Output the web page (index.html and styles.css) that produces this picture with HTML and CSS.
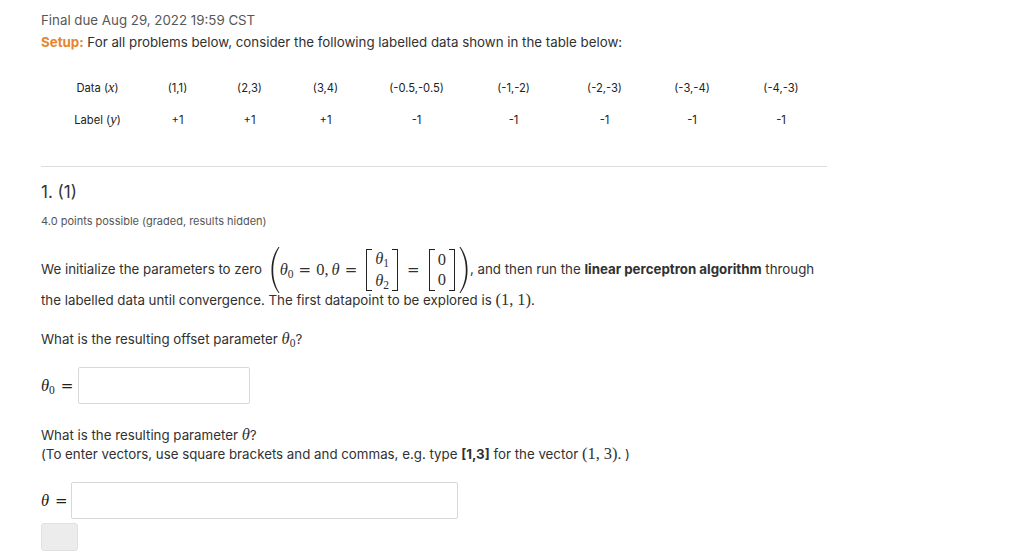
FILE: index.html
```html
<!DOCTYPE html>
<html>
<head>
<meta charset="utf-8">
<link rel="stylesheet" href="styles.css">
</head>
<body>
<div class="page">
  <div class="due">Final due Aug 29, 2022 19:59 CST</div>
  <p class="setup"><span class="setup-label">Setup:</span> For all problems below, consider the following labelled data shown in the table below:</p>

  <table class="data">
    <colgroup>
      <col style="width:85px"><col style="width:75px"><col style="width:69px"><col style="width:83px"><col style="width:99px"><col style="width:95px"><col style="width:87px"><col style="width:88px"><col style="width:90px">
    </colgroup>
    <tr>
      <td>Data (<span class="tm">x</span>)</td><td>(1,1)</td><td>(2,3)</td><td>(3,4)</td><td>(-0.5,-0.5)</td><td>(-1,-2)</td><td>(-2,-3)</td><td>(-3,-4)</td><td>(-4,-3)</td>
    </tr>
    <tr>
      <td>Label (<span class="tm">y</span>)</td><td>+1</td><td>+1</td><td>+1</td><td>-1</td><td>-1</td><td>-1</td><td>-1</td><td>-1</td>
    </tr>
  </table>

  <hr class="rule">

  <h3 class="problem-title">1. (1)</h3>
  <div class="points">4.0 points possible (graded, results hidden)</div>

  <p class="intro">We initialize the parameters to zero <span class="mathblock"><svg class="paren" width="10" height="48" viewBox="0 0 10 48"><path d="M8.5 1 C3 9 1.5 16 1.5 24 C1.5 32 3 39 8.5 47 L9.5 47 C4.8 39 3.2 32 3.2 24 C3.2 16 4.8 9 9.5 1 Z" fill="#222"/></svg><span class="mg"><span class="m">θ</span><sub class="ms">0</sub></span><span class="op">=</span><span class="mr">0,</span><span class="m th">θ</span><span class="op">=</span><span class="matrix"><span class="cell"><span class="m">θ</span><sub class="ms">1</sub></span><span class="cell"><span class="m">θ</span><sub class="ms">2</sub></span></span><span class="op">=</span><span class="matrix"><span class="cell mr">0</span><span class="cell mr">0</span></span><svg class="paren" width="10" height="48" viewBox="0 0 10 48"><path d="M1.5 1 C7 9 8.5 16 8.5 24 C8.5 32 7 39 1.5 47 L0.5 47 C5.2 39 6.8 32 6.8 24 C6.8 16 5.2 9 0.5 1 Z" fill="#222"/></svg></span>, and then run the <b>linear perceptron algorithm</b> through the labelled data until convergence. The first datapoint to be explored is <span class="mr">(1,<span class="sp"></span>1)</span>.</p>

  <p class="question">What is the resulting offset parameter <span class="m">θ</span><sub class="ms">0</sub>?</p>

  <div class="answer a1">
    <span class="label"><span class="m">θ</span><sub class="ms">0</sub><span class="op">=</span></span>
    <input class="box box1" type="text">
  </div>

  <p class="question q2">What is the resulting parameter <span class="m">θ</span>?<br>(To enter vectors, use square brackets and and commas, e.g. type <b>[1,3]</b> for the vector <span class="mr">(1,<span class="sp"></span>3)</span>. )</p>

  <div class="answer a2">
    <span class="label"><span class="m">θ</span><span class="op">=</span></span>
    <input class="box box2" type="text">
  </div>
  <div class="btn"></div>
</div>
</body>
</html>
```
FILE: styles.css
```css
* { box-sizing: border-box; }
body {
  margin: 0;
  background: #fff;
  font-family: Inter, "Noto Sans", sans-serif;
  color: #313131;
  font-size: 13.3px;
}
.page {
  padding: 12px 0 0 41px;
  width: 827px;
}
.due {
  color: #575757;
  line-height: 16px;
}
.setup {
  margin: 6px 0 0 0;
  line-height: 16px;
}
.setup-label {
  color: #e5862e;
  font-weight: 700;
}
.data {
  border-collapse: collapse;
  margin: 22px 0 0 14px;
  font-size: 11.2px;
  table-layout: fixed;
}
.data td {
  text-align: center;
  padding: 0;
  height: 32px;
  color: #222;
}
.tm {
  font-family: "Liberation Serif", "DejaVu Serif", serif;
  font-style: italic;
  font-size: 1.3em;
  line-height: 0;
}
.m {
  font-family: "Liberation Serif", "DejaVu Serif", serif;
  font-style: italic;
  font-size: 16.5px;
}
.ms {
  font-family: "Liberation Serif", "DejaVu Serif", serif;
  font-size: 11.5px;
  vertical-align: -3px;
  line-height: 0;
}
.mr {
  font-family: "Liberation Serif", "DejaVu Serif", serif;
  font-size: 16.5px;
  line-height: 0;
}
.sp { display: inline-block; width: 4px; }
.op {
  font-family: "DejaVu Serif", "Liberation Serif", serif;
  font-size: 15px;
  margin: 0 5px;
  line-height: 0;
}
.mg { white-space: nowrap; }
.th { margin-left: 3px; }
.rule {
  border: 0;
  border-top: 1px solid #dcdcdc;
  margin: 30px 0 0 0;
}
.problem-title {
  font-size: 17px;
  font-weight: 400;
  margin: 14px 0 0 0;
  line-height: 22px;
  color: #333;
}
.points {
  font-size: 11px;
  color: #555;
  margin-top: 11px;
  line-height: 14px;
}
.intro {
  margin: 26px 0 0 0;
  line-height: 30px;
  width: 786px;
}
.mathblock {
  display: inline-flex;
  align-items: center;
  vertical-align: middle;
  height: 48px;
  margin-top: -10px;
  margin-bottom: -8px;
  position: relative;
  top: 1px;
  margin-left: 4px;
  margin-right: 1px;
}
.mathblock .mr, .mathblock .op { line-height: normal; }
.paren { display: block; }
.matrix {
  display: inline-flex;
  flex-direction: column;
  justify-content: center;
  height: 42px;
  padding: 0 8px;
  border-left: 1px solid #222;
  border-right: 1px solid #222;
  line-height: 21px;
  margin: 0 4px;
  background:
    linear-gradient(#222,#222) left top / 5px 1px no-repeat,
    linear-gradient(#222,#222) left bottom / 5px 1px no-repeat,
    linear-gradient(#222,#222) right top / 5px 1px no-repeat,
    linear-gradient(#222,#222) right bottom / 5px 1px no-repeat;
}
.matrix .cell { display: block; text-align: center; white-space: nowrap; }
.question {
  margin: 14px 0 0 0;
  line-height: 20px;
}
.answer {
  display: flex;
  align-items: center;
}
.a1 { margin-top: 18px; }
.label {
  white-space: nowrap;
  color: #222;
}
.label .op { margin: 0 0 0 6px; line-height: normal; }
.box {
  border: 1px solid #d8d8d8;
  border-radius: 2px;
  height: 37px;
  background: #fff;
  margin: 0;
  padding: 0;
  outline: none;
}
.box1 { width: 172px; margin-left: 5px; }
.q2 { margin-top: 21px; line-height: 19px; }
.a2 { margin-top: 18px; }
.box2 { width: 387px; margin-left: 3px; }
.btn {
  width: 37px;
  height: 28px;
  background: #ececec;
  border: 1px solid #e0e0e0;
  border-radius: 3px;
  margin-top: 4px;
}
```
